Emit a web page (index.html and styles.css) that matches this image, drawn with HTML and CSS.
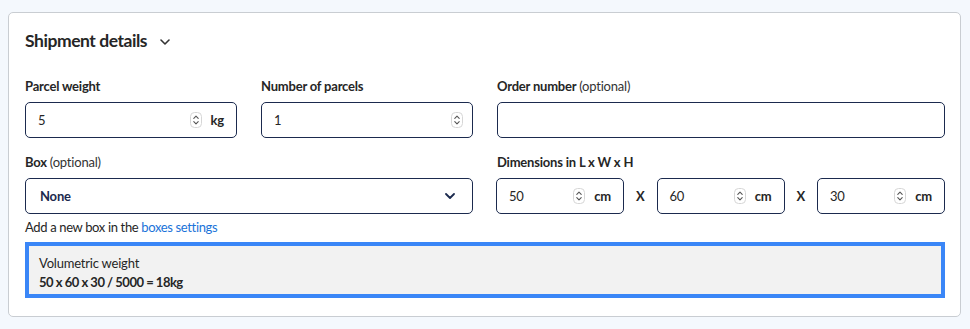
FILE: index.html
```html
<!DOCTYPE html>
<html lang="en">
<head>
<meta charset="utf-8">
<title>Shipment details</title>
<link rel="stylesheet" href="styles.css">
</head>
<body>
<section class="card">
  <header class="card-head">
    <h2 class="title">Shipment details</h2>
    <svg class="title-chev" width="10" height="6" viewBox="0 0 10 6"><path d="M1 1l4 4 4-4" fill="none" stroke="#333" stroke-width="1.6" stroke-linecap="round" stroke-linejoin="round"/></svg>
  </header>

  <div class="grid">
    <div class="field">
      <label class="label">Parcel weight</label>
      <div class="box">
        <span class="value">5</span>
        <span class="spin"><svg width="12" height="16" viewBox="0 0 12 16"><rect x="0.5" y="0.5" width="11" height="15" rx="4" fill="#fff" stroke="#d6d6d6"/><path d="M3.8 6.3L6 4.2l2.2 2.1M3.8 9.7L6 11.8l2.2-2.1" fill="none" stroke="#555" stroke-width="1.1" stroke-linecap="round" stroke-linejoin="round"/></svg></span>
        <span class="unit">kg</span>
      </div>
    </div>
    <div class="field">
      <label class="label">Number of parcels</label>
      <div class="box box-nounit">
        <span class="value">1</span>
        <span class="spin"><svg width="12" height="16" viewBox="0 0 12 16"><rect x="0.5" y="0.5" width="11" height="15" rx="4" fill="#fff" stroke="#d6d6d6"/><path d="M3.8 6.3L6 4.2l2.2 2.1M3.8 9.7L6 11.8l2.2-2.1" fill="none" stroke="#555" stroke-width="1.1" stroke-linecap="round" stroke-linejoin="round"/></svg></span>
      </div>
    </div>
    <div class="field span2">
      <label class="label">Order number <span class="opt">(optional)</span></label>
      <div class="box"></div>
    </div>

    <div class="field span2">
      <label class="label">Box <span class="opt">(optional)</span></label>
      <div class="box select">
        <span class="value sel-value">None</span>
        <svg class="sel-chev" width="10" height="6" viewBox="0 0 10 6"><path d="M1 1l4 4 4-4" fill="none" stroke="#1b2a4e" stroke-width="1.8" stroke-linecap="round" stroke-linejoin="round"/></svg>
      </div>
      <p class="help">Add a new box in the <a class="link" href="#">boxes settings</a></p>
    </div>
    <div class="field span2">
      <label class="label">Dimensions in L x W x H</label>
      <div class="dims">
        <div class="box">
          <span class="value">50</span>
          <span class="spin"><svg width="12" height="16" viewBox="0 0 12 16"><rect x="0.5" y="0.5" width="11" height="15" rx="4" fill="#fff" stroke="#d6d6d6"/><path d="M3.8 6.3L6 4.2l2.2 2.1M3.8 9.7L6 11.8l2.2-2.1" fill="none" stroke="#555" stroke-width="1.1" stroke-linecap="round" stroke-linejoin="round"/></svg></span>
          <span class="unit">cm</span>
        </div>
        <span class="times">X</span>
        <div class="box">
          <span class="value">60</span>
          <span class="spin"><svg width="12" height="16" viewBox="0 0 12 16"><rect x="0.5" y="0.5" width="11" height="15" rx="4" fill="#fff" stroke="#d6d6d6"/><path d="M3.8 6.3L6 4.2l2.2 2.1M3.8 9.7L6 11.8l2.2-2.1" fill="none" stroke="#555" stroke-width="1.1" stroke-linecap="round" stroke-linejoin="round"/></svg></span>
          <span class="unit">cm</span>
        </div>
        <span class="times">X</span>
        <div class="box">
          <span class="value">30</span>
          <span class="spin"><svg width="12" height="16" viewBox="0 0 12 16"><rect x="0.5" y="0.5" width="11" height="15" rx="4" fill="#fff" stroke="#d6d6d6"/><path d="M3.8 6.3L6 4.2l2.2 2.1M3.8 9.7L6 11.8l2.2-2.1" fill="none" stroke="#555" stroke-width="1.1" stroke-linecap="round" stroke-linejoin="round"/></svg></span>
          <span class="unit">cm</span>
        </div>
      </div>
    </div>
  </div>

  <div class="volumetric">
    <div class="vol-label">Volumetric weight</div>
    <div class="vol-calc">50 x 60 x 30 / 5000 = 18kg</div>
  </div>
</section>
</body>
</html>
```

FILE: styles.css
```css
* { box-sizing: border-box; }
html, body { height: 100%; }
body {
  margin: 0;
  background: #f4f8fd;
  font-family: "Lato", "Liberation Sans", sans-serif;
  font-size: 13px;
  letter-spacing: -0.2px;
  color: #262626;
}
.card {
  margin: 12px 9px 0 8px;
  height: 305px;
  background: #fff;
  border: 1px solid #c9cdd2;
  border-radius: 5px;
  padding: 16px 15px 0 16px;
}
.card-head {
  display: flex;
  align-items: center;
  gap: 13px;
  height: 24px;
}
.title {
  margin: 0;
  font-size: 17.5px;
  letter-spacing: -0.45px;
  font-weight: 700;
  line-height: 24px;
  color: #262626;
}
.title-chev { margin-top: 1px; }
.grid {
  margin-top: 23px;
  display: grid;
  grid-template-columns: repeat(4, 1fr);
  column-gap: 24px;
  row-gap: 14px;
}
.span2 { grid-column: span 2; }
.field { display: flex; flex-direction: column; }
.label {
  font-weight: 700;
  line-height: 20px;
  margin-bottom: 6px;
  color: #262626;
}
.opt { font-weight: 400; color: #333; }
.box {
  height: 36px;
  border: 1px solid #1b2a4e;
  border-radius: 5px;
  display: flex;
  align-items: center;
  padding: 0 12px 0 12px;
  background: #fff;
}
.box-nounit { padding-right: 9px; }
.value { flex: 1; color: #262626; }
.spin { display: flex; margin-right: 9px; }
.box-nounit .spin { margin-right: 0; }
.unit { font-weight: 700; color: #262626; }
.select { padding: 0 17px 0 14px; }
.sel-value { font-weight: 700; color: #1b2a4e; }
.help { margin: 3px 0 0; line-height: 20px; letter-spacing: -0.35px; }
.link { color: #1a73d9; text-decoration: none; }
.dims {
  display: flex;
  align-items: center;
  margin-left: -1px;
}
.dims .box { flex: 0 0 128px; }
.times {
  flex: 1;
  text-align: center;
  font-weight: 700;
}
.volumetric {
  margin-top: 5px;
  height: 56px;
  border: 4px solid #3a86f7;
  background: #f2f2f2;
  padding: 8px 10px 0;
  line-height: 19px;
}
.vol-calc { font-weight: 700; letter-spacing: -0.5px; }
```
